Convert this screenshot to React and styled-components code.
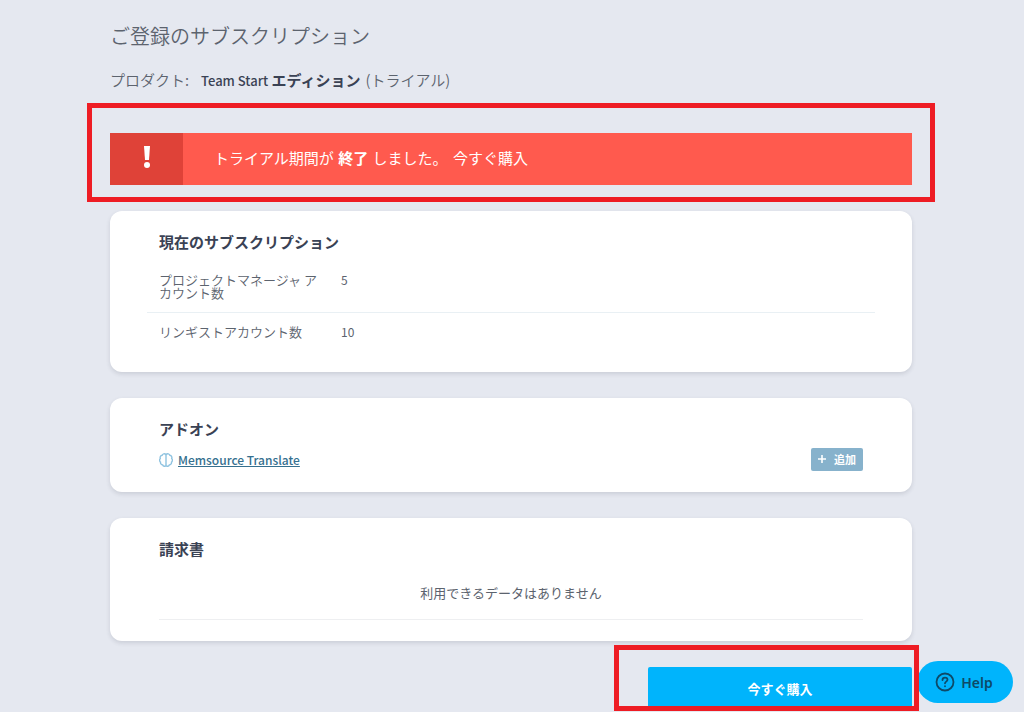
import React from "react";
import styled, { createGlobalStyle } from "styled-components";

const GlobalStyle = createGlobalStyle`
  * {
    box-sizing: border-box;
  }

  body {
    margin: 0;
    background-color: #e5e8f0;
    color: #5c636e;
    font-family: "Noto Sans CJK JP", sans-serif;
    font-size: 13px;
  }
`;

const PageContainer = styled.main`
  display: flex;
  flex-direction: column;
  padding: 20px 112px 0 110px;
`;

const PageTitle = styled.h1`
  margin: 0 0 16px;
  font-size: 20px;
  font-weight: 350;
  line-height: 32px;
`;

const Product = styled.p`
  display: flex;
  align-items: baseline;
  margin: 0 0 41px;
  font-size: 15px;
  font-weight: 350;
  line-height: 23px;

  strong {
    margin: 0 5px 0 12px;
    color: #3a4254;
    font-size: 15px;
    font-weight: 700;
  }

  .edition {
    font-size: 13px;
    font-weight: 500;
  }
`;

const Highlight = styled.div`
  position: relative;
  z-index: 2;
  align-self: ${(props) => (props.$end ? "flex-end" : "stretch")};
  width: ${(props) => props.$width || "auto"};

  &::after {
    content: "";
    position: absolute;
    inset: ${(props) => props.$inset};
    border: 5px solid #ee1c24;
    pointer-events: none;
  }
`;

const Alert = styled.div`
  display: flex;
  height: 52px;
  background-color: #ff5a4e;
  color: #fff;
  font-size: 15px;

  .icon {
    display: flex;
    align-items: center;
    justify-content: center;
    width: 73px;
    padding-bottom: 4px;
    background-color: #df4238;
  }

  p {
    margin: 0;
    padding-left: 31px;
    line-height: 50px;
  }

  strong {
    margin: 0 1px;
  }

  a {
    margin-left: 2px;
    color: inherit;
    text-decoration: none;
  }
`;

const Card = styled.section`
  margin-top: 26px;
  padding: 21px 49px;
  border-radius: 12px;
  background-color: #fff;
  box-shadow: 0 2px 4px rgba(60, 70, 90, 0.16);
`;

const CardTitle = styled.h2`
  margin: 0;
  color: #3a4254;
  font-size: 15px;
  font-weight: 700;
  line-height: 20px;
`;

const AccountTable = styled.table`
  width: calc(100% + 24px);
  margin: 9px -12px 0;
  border-collapse: collapse;
  line-height: 13px;

  th,
  td {
    padding: 12px 12px 13px;
    text-align: left;
    vertical-align: top;
    font-weight: 400;
  }

  th {
    width: 182px;
    padding-right: 6px;
    font-weight: 350;
  }

  td {
    font-size: 12px;
  }

  tr + tr {
    border-top: 1px solid #e9f0f4;
  }
`;

const AddonRow = styled.div`
  display: flex;
  align-items: center;
  justify-content: space-between;
  margin-top: 9px;
`;

const AddonLink = styled.a`
  display: flex;
  align-items: center;
  gap: 5px;
  color: #35708f;
  font-size: 12px;
  font-weight: 500;
  line-height: 20px;
  text-decoration: none;

  span {
    text-decoration: underline;
  }
`;

const AddButton = styled.button`
  display: flex;
  align-items: center;
  justify-content: center;
  gap: 8px;
  width: 52px;
  height: 23px;
  padding: 0 0 2px;
  border: none;
  border-radius: 2px;
  background-color: #87b2cc;
  color: #fff;
  font-family: inherit;
  font-size: 11px;
  font-weight: 700;
`;

const EmptyMessage = styled.p`
  margin: 0;
  padding: 24px 0 16px;
  border-bottom: 1px solid #eeeff1;
  line-height: 20px;
  text-align: center;
`;

const BuyButton = styled.button`
  display: block;
  width: 100%;
  height: 44px;
  margin-top: 26px;
  padding: 0 0 2px;
  border: none;
  border-radius: 2px;
  background-color: #00b4fc;
  color: #fff;
  font-family: inherit;
  font-size: 13px;
  font-weight: 700;
`;

const HelpButton = styled.button`
  position: fixed;
  right: 11px;
  bottom: 9px;
  z-index: 1;
  display: flex;
  align-items: center;
  justify-content: center;
  gap: 6px;
  width: 96px;
  height: 42px;
  padding: 0 2px 0 0;
  border: none;
  border-radius: 21px;
  background-color: #00b4fc;
  color: #0d4a68;
  font-family: "Noto Sans", "Open Sans", sans-serif;
  font-size: 14px;
  font-weight: 600;
`;

const accounts = [
  { label: "プロジェクトマネージャ アカウント数", value: 5 },
  { label: "リンギストアカウント数", value: 10 },
];

const App = () => {
  return (
    <>
      <GlobalStyle />
      <PageContainer>
        <PageTitle>ご登録のサブスクリプション</PageTitle>
        <Product>
          プロダクト:
          <strong>
            <span className="edition">Team Start</span> エディション
          </strong>
          (トライアル)
        </Product>

        <Highlight $inset="-30px -23px -17px -23px">
          <Alert role="alert">
            <div className="icon">
              <svg width="10" height="24" viewBox="0 0 10 24" fill="#fff">
                <path d="M2 1h6l-1 14H3z" />
                <circle cx="5" cy="20" r="3" />
              </svg>
            </div>
            <p>
              トライアル期間が <strong>終了</strong> しました。{" "}
              <a href="#buy">今すぐ購入</a>
            </p>
          </Alert>
        </Highlight>

        <Card>
          <CardTitle>現在のサブスクリプション</CardTitle>
          <AccountTable>
            <tbody>
              {accounts.map((account) => (
                <tr key={account.label}>
                  <th scope="row">{account.label}</th>
                  <td>{account.value}</td>
                </tr>
              ))}
            </tbody>
          </AccountTable>
        </Card>

        <Card>
          <CardTitle>アドオン</CardTitle>
          <AddonRow>
            <AddonLink href="#memsource-translate">
              <svg
                width="14"
                height="14"
                viewBox="0 0 14 14"
                fill="none"
                stroke="#8fc3e0"
                strokeWidth="1.4"
              >
                <path d="M7 1.5C5.500.2 3.600.8 3.200 2.200 1.400 2.600.8 4.300 1.300 5.500.2 6.600.5 8.400 1.500 9.100 1.300 10.900 2.500 11.800 3.600 11.900 4.300 13.500 6.200 13.700 7 12.600 7.800 13.700 9.700 13.500 10.400 11.900 11.500 11.800 12.700 10.900 12.500 9.100 13.500 8.400 13.800 6.600 12.700 5.500 13.200 4.300 12.600 2.600 10.800 2.200 10.400.8 8.500.2 7 1.500z" />
                <path d="M7 1.500v11" />
              </svg>
              <span>Memsource Translate</span>
            </AddonLink>
            <AddButton type="button">
              <svg width="8" height="8" viewBox="0 0 8 8" stroke="#fff" strokeWidth="1.6">
                <path d="M4 0v8M0 4h8" />
              </svg>
              追加
            </AddButton>
          </AddonRow>
        </Card>

        <Card>
          <CardTitle>請求書</CardTitle>
          <EmptyMessage>利用できるデータはありません</EmptyMessage>
        </Card>

        <Highlight $end $width="264px" $inset="4px -7px 0 -34px">
          <BuyButton type="button">今すぐ購入</BuyButton>
        </Highlight>
      </PageContainer>

      <HelpButton type="button">
        <svg
          width="20"
          height="20"
          viewBox="0 0 20 20"
          fill="none"
          stroke="currentColor"
          strokeWidth="1.8"
          strokeLinecap="round"
        >
          <circle cx="10" cy="10" r="8.500" />
          <path d="M7.500 8c0-1.500 1.100-2.400 2.500-2.400s2.500.9 2.500 2.200c0 1.700-2.500 1.900-2.500 3.500" />
          <path d="M10 14.200v.1" />
        </svg>
        Help
      </HelpButton>
    </>
  );
};

export default App;
